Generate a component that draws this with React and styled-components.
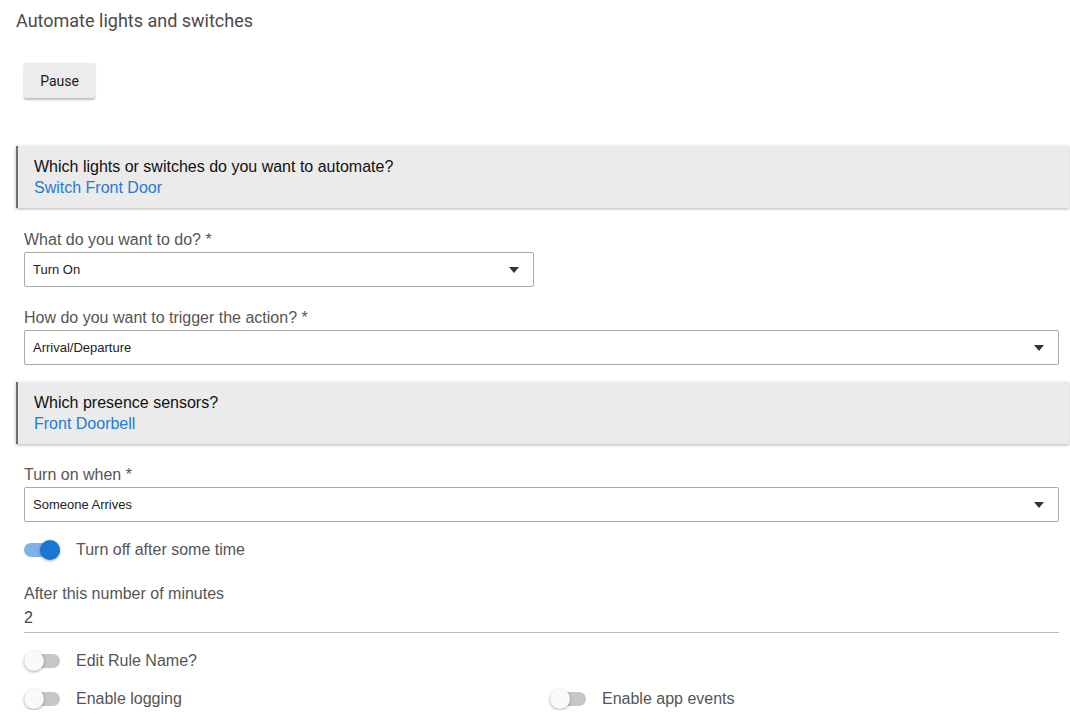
import React, { useState } from "react";
import styled, { createGlobalStyle } from "styled-components";

const GlobalStyle = createGlobalStyle`
	body {
		margin: 0;
		background: #fff;
		font-family: "Liberation Sans", Arial, sans-serif;
	}
`;

const Page = styled.div`
	padding: 10px 1px 0 16px;
	display: flex;
	flex-direction: column;
`;

const Title = styled.h1`
	margin: 0;
	font-family: Roboto, sans-serif;
	font-size: 18px;
	font-weight: 400;
	line-height: 22px;
	color: #4a4a4a;
`;

const PauseButton = styled.button`
	align-self: flex-start;
	margin: 31px 0 0 8px;
	width: 71px;
	height: 35px;
	border: none;
	border-radius: 2px;
	background: #ececec;
	box-shadow: 0 2px 2px rgba(0, 0, 0, 0.24), 0 0 1px rgba(0, 0, 0, 0.12);
	font-family: Roboto, sans-serif;
	font-size: 14px;
	font-weight: 400;
	color: #1a1a1a;
`;

const Card = styled.div`
	margin-top: ${props => props.top}px;
	padding: 10px 16px 10px 16px;
	background: #ebebeb;
	border-left: 2px solid #6f6f6f;
	box-shadow: 0 1px 3px rgba(0, 0, 0, 0.3);
	font-size: 16px;
	line-height: 21px;
`;

const CardTitle = styled.div`
	color: #111;
`;

const CardValue = styled.div`
	color: #1f7ad8;
`;

const Field = styled.div`
	margin: ${props => props.top}px 10px 0 8px;
	width: ${props => (props.narrow ? "510px" : "auto")};
	display: flex;
	flex-direction: column;
`;

const Label = styled.label`
	font-size: 16px;
	line-height: 20px;
	color: #555;
	margin-bottom: 2px;
`;

const SelectBox = styled.div`
	height: 35px;
	box-sizing: border-box;
	border: 1px solid #a9a9a9;
	border-radius: 2px;
	padding: 0 14px 0 8px;
	display: flex;
	align-items: center;
	justify-content: space-between;
	font-size: 13px;
	color: #222;
`;

const Caret = styled.span`
	width: 0;
	height: 0;
	border-left: 5px solid transparent;
	border-right: 5px solid transparent;
	border-top: 6px solid #333;
`;

const ToggleRow = styled.div`
	margin: ${props => props.top}px 0 0 8px;
	display: flex;
`;

const ToggleItem = styled.label`
	flex: ${props => (props.half ? "0 0 526px" : "1")};
	display: flex;
	align-items: center;
	height: 22px;
	font-size: 16px;
	color: #555;
	cursor: pointer;
`;

const Track = styled.span`
	position: relative;
	width: 36px;
	height: 14px;
	border-radius: 7px;
	background: ${props => (props.on ? "#7fb2e6" : "#c6c6c6")};
	margin-right: 16px;
	flex-shrink: 0;
`;

const Thumb = styled.span`
	position: absolute;
	top: -3px;
	left: ${props => (props.on ? "16px" : "0")};
	width: 20px;
	height: 20px;
	border-radius: 50%;
	background: ${props => (props.on ? "#1976d2" : "#fafafa")};
	box-shadow: 0 1px 3px rgba(0, 0, 0, 0.35);
`;

const NumberField = styled.div`
	margin: 23px 10px 0 8px;
	display: flex;
	flex-direction: column;
	border-bottom: 1px solid #bdbdbd;
	padding-bottom: 4px;
`;

const NumberValue = styled.div`
	font-size: 16px;
	line-height: 20px;
	color: #444;
	margin-top: 2px;
`;

function Select({ label, value, top, narrow }) {
	return (
		<Field top={top} narrow={narrow}>
			<Label>{label}</Label>
			<SelectBox>
				<span>{value}</span>
				<Caret />
			</SelectBox>
		</Field>
	);
}

function Toggle({ label, initial, half }) {
	const [on, setOn] = useState(initial);
	return (
		<ToggleItem half={half} onClick={() => setOn(!on)}>
			<Track on={on}>
				<Thumb on={on} />
			</Track>
			{label}
		</ToggleItem>
	);
}

export default function App() {
	return (
		<>
			<GlobalStyle />
			<Page>
				<Title>Automate lights and switches</Title>
				<PauseButton>Pause</PauseButton>
				<Card top={48}>
					<CardTitle>Which lights or switches do you want to automate?</CardTitle>
					<CardValue>Switch Front Door</CardValue>
				</Card>
				<Select top={22} narrow label="What do you want to do? *" value="Turn On" />
				<Select top={21} label="How do you want to trigger the action? *" value="Arrival/Departure" />
				<Card top={17}>
					<CardTitle>Which presence sensors?</CardTitle>
					<CardValue>Front Doorbell</CardValue>
				</Card>
				<Select top={21} label="Turn on when *" value="Someone Arrives" />
				<ToggleRow top={17}>
					<Toggle label="Turn off after some time" initial={true} />
				</ToggleRow>
				<NumberField>
					<Label>After this number of minutes</Label>
					<NumberValue>2</NumberValue>
				</NumberField>
				<ToggleRow top={17}>
					<Toggle label="Edit Rule Name?" initial={false} />
				</ToggleRow>
				<ToggleRow top={16}>
					<Toggle half label="Enable logging" initial={false} />
					<Toggle label="Enable app events" initial={false} />
				</ToggleRow>
			</Page>
		</>
	);
}
